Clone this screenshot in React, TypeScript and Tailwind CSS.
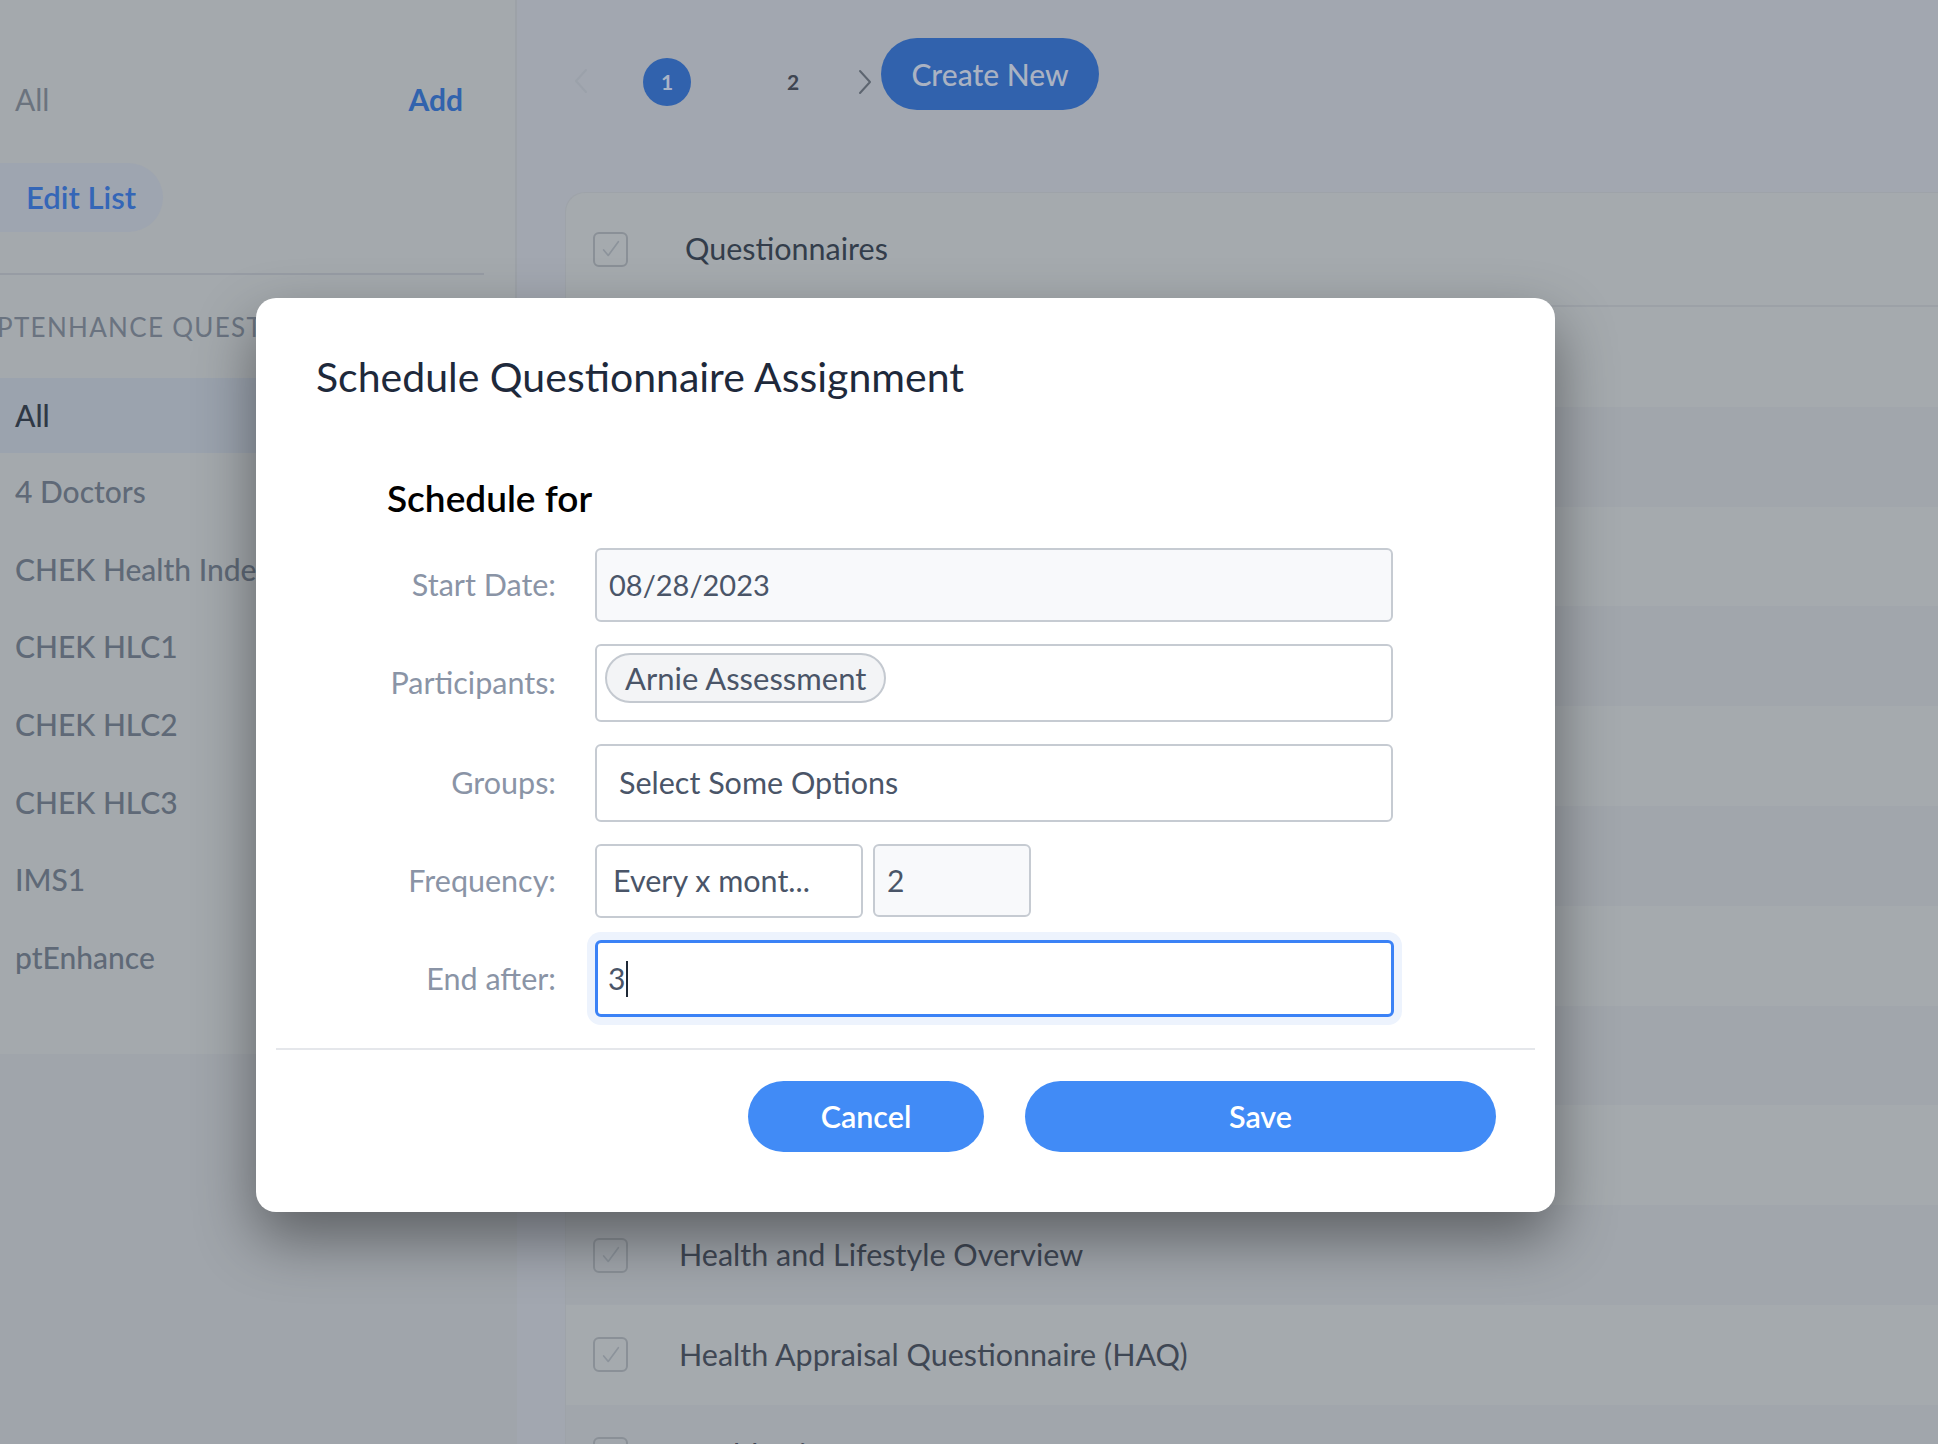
import React from "react";

const font = { fontFamily: "Lato, 'Noto Sans', sans-serif" };

const groups = [
  "4 Doctors",
  "CHEK Health Index",
  "CHEK HLC1",
  "CHEK HLC2",
  "CHEK HLC3",
  "IMS1",
  "ptEnhance",
];

const rows = [
  "4 Doctors Intake",
  "Adrenal Fatigue Questionnaire",
  "Blood Sugar Assessment",
  "CHEK HLC1 Questionnaire",
  "CHEK HLC2 Questionnaire",
  "CHEK HLC3 Questionnaire",
  "Digestion Questionnaire",
  "Energy Assessment",
  "Food Sensitivity Survey",
  "Health and Lifestyle Overview",
  "Health Appraisal Questionnaire (HAQ)",
  "Health History",
];

function Check({ className = "" }: { className?: string }) {
  return (
    <div
      className={
        "w-[35px] h-[35px] rounded-[6px] border-2 border-[#8a9097] flex items-center justify-center shrink-0 " +
        className
      }
    >
      <svg width="22" height="22" viewBox="0 0 24 24" fill="none">
        <path d="M4 13l5 6L20 4" stroke="#8c939b" strokeWidth="1.8" strokeLinecap="round" strokeLinejoin="round" />
      </svg>
    </div>
  );
}

function Sidebar() {
  return (
    <aside className="w-[517px] h-[1054px] bg-[#a4a9ad] border-r-2 border-[#9da2a8] shrink-0 overflow-hidden">
      <div className="w-[484px]">
        <div className="flex items-center justify-between pl-[15px] pr-[21px] pt-[80px] h-[118px] text-[30px]">
          <span className="text-[#6b737e]">All</span>
          <span className="text-[#3163ad] font-bold">Add</span>
        </div>
        <div className="mt-[45px] w-[163px] h-[69px] rounded-r-full rounded-l-[20px] bg-[#9ea5b0] flex items-center pl-[26px] text-[31px] font-semibold text-[#3466b7]">
          Edit List
        </div>
        <div className="mt-[41px] h-[2px] bg-[#979ca4]" />
        <div className="h-[104px] flex items-center -ml-[3px] text-[26px] tracking-[0.05em] text-[#6a7380] whitespace-nowrap">
          PTENHANCE QUESTIONNAIRES
        </div>
      </div>
      <div className="-mt-[1px]">
        <div className="h-[75px] bg-[#9ba3ae] flex items-center pl-[15px] text-[30px] font-medium text-[#2f3845]">
          All
        </div>
        {groups.map((g) => (
          <div
            key={g}
            className="h-[77.6px] flex items-center pl-[15px] text-[30px] font-medium text-[#5f6977] whitespace-nowrap"
          >
            {g}
          </div>
        ))}
      </div>
    </aside>
  );
}

function Main() {
  return (
    <main className="flex-1 min-w-0">
      <div className="flex items-start pt-[38px] h-[192px]">
        <span className="ml-[56px] mt-[30px] w-[16px] flex justify-center">
          <svg width="14" height="26" viewBox="0 0 14 26" fill="none">
            <path d="M12 2L2 13l10 11" stroke="#9ba1aa" strokeWidth="2" strokeLinecap="round" strokeLinejoin="round" />
          </svg>
        </span>
        <span className="ml-[54px] mt-[20px] w-[48px] h-[48px] rounded-full bg-[#3162ad] text-[#a9b3c6] font-bold text-[21px] flex items-center justify-center">
          1
        </span>
        <span className="ml-[78px] mt-[20px] w-[48px] h-[48px] text-[#3e4450] font-bold text-[21px] flex items-center justify-center">
          2
        </span>
        <span className="ml-[40px] mt-[31px] w-[16px] flex justify-center">
          <svg width="14" height="26" viewBox="0 0 14 26" fill="none">
            <path d="M2 2l10 11L2 24" stroke="#5d6570" strokeWidth="2" strokeLinecap="round" strokeLinejoin="round" />
          </svg>
        </span>
        <button className="ml-[8px] w-[218px] h-[72px] rounded-full bg-[#3162ad] text-[#aab2c2] text-[30px] font-medium flex items-center justify-center">
          Create New
        </button>
      </div>
      <div className="ml-[48px] bg-[#a5aaae] rounded-tl-[20px] border-l border-t border-[#9ea3a9]">
        <div className="h-[114px] flex items-center pl-[27px] border-b-2 border-[#9ca1a7]">
          <Check />
          <span className="ml-[57px] text-[30.5px] text-[#333d4b]">Questionnaires</span>
        </div>
        {rows.map((r, i) => (
          <div
            key={r}
            className={
              "h-[99.8px] flex items-center pl-[27px] " + (i % 2 === 1 ? "bg-[#a1a6ac]" : "bg-[#a5aaae]")
            }
          >
            <Check />
            <span className="ml-[51px] text-[30.5px] text-[#3f4754] whitespace-nowrap">{r}</span>
          </div>
        ))}
      </div>
    </main>
  );
}

function Label({ children }: { children: React.ReactNode }) {
  return (
    <div className="w-[169px] shrink-0 text-right text-[30.5px] text-[#8a94a6] whitespace-nowrap">{children}</div>
  );
}

function Modal() {
  return (
    <div className="absolute left-[256px] top-[298px] w-[1299px] bg-white rounded-[20px] shadow-[0_26px_60px_rgba(0,0,0,0.42)]">
      <div className="pt-[56px] pl-[60px] h-[100px]">
        <h2 className="text-[41px] leading-[46px] text-[#1e293b] whitespace-nowrap">Schedule Questionnaire Assignment</h2>
      </div>
      <div className="ml-[131px] mt-[79px] text-[37px] leading-[42px] font-semibold text-black">Schedule for</div>
      <div className="ml-[131px] mt-[29px] flex flex-col gap-[22px]">
        <div className="flex items-center gap-[39px]">
          <Label>Start Date:</Label>
          <div className="w-[798px] h-[74px] bg-[#f8f9fb] border-2 border-[#c6cbd2] rounded-[6px] flex items-center pl-[12px] text-[29px] text-[#4a5568]">
            08/28/2023
          </div>
        </div>
        <div className="flex items-center gap-[39px]">
          <Label>Participants:</Label>
          <div className="w-[798px] h-[78px] bg-white border-2 border-[#c6cbd2] rounded-[6px] flex items-start pt-[7px] pl-[8px]">
            <span className="h-[50px] px-[18px] rounded-full bg-[#f3f4f6] border-2 border-[#c4c9d0] flex items-center text-[31px] text-[#4a5568]">
              Arnie Assessment
            </span>
          </div>
        </div>
        <div className="flex items-center gap-[39px]">
          <Label>Groups:</Label>
          <div className="w-[798px] h-[78px] bg-white border-2 border-[#c6cbd2] rounded-[6px] flex items-center pl-[22px] text-[30.5px] text-[#4a5568]">
            Select Some Options
          </div>
        </div>
        <div className="flex items-center gap-[39px]">
          <Label>Frequency:</Label>
          <div className="flex gap-[10px]">
            <div className="w-[268px] h-[74px] bg-white border-2 border-[#c6cbd2] rounded-[6px] flex items-center pl-[16px] text-[30.5px] text-[#4a5568] whitespace-nowrap">
              Every x mont...
            </div>
            <div className="w-[158px] h-[73px] bg-[#f8f9fb] border-2 border-[#c6cbd2] rounded-[6px] flex items-center pl-[12px] text-[30px] text-[#4a5568]">
              2
            </div>
          </div>
        </div>
        <div className="flex items-center gap-[39px]">
          <Label>End after:</Label>
          <div className="w-[799px] h-[77px] bg-white border-[3px] border-[#3b82f6] rounded-[6px] ring-[8px] ring-[#edf3fd] flex items-center pl-[10px] text-[30px] text-[#4a5568]">
            3<span className="ml-[1px] w-[2px] h-[36px] bg-[#1f2937]" />
          </div>
        </div>
      </div>
      <div className="mx-[20px] mt-[31px] h-[2px] bg-[#e5e7eb]" />
      <div className="mt-[31px] pb-[60px] pr-[59px] flex justify-end gap-[41px]">
        <button className="w-[236px] h-[71px] rounded-full bg-[#418bf6] text-white text-[30.5px] font-semibold">
          Cancel
        </button>
        <button className="w-[471px] h-[71px] rounded-full bg-[#418bf6] text-white text-[30.5px] font-semibold">
          Save
        </button>
      </div>
    </div>
  );
}

export default function App() {
  return (
    <div className="relative w-[1938px] h-[1444px] overflow-hidden bg-[#a1a6ae]" style={font}>
      <div className="flex h-full bg-[#a2a7b0]">
        <div className="bg-[#a0a5ab] h-full">
          <Sidebar />
        </div>
        <Main />
      </div>
      <Modal />
    </div>
  );
}
